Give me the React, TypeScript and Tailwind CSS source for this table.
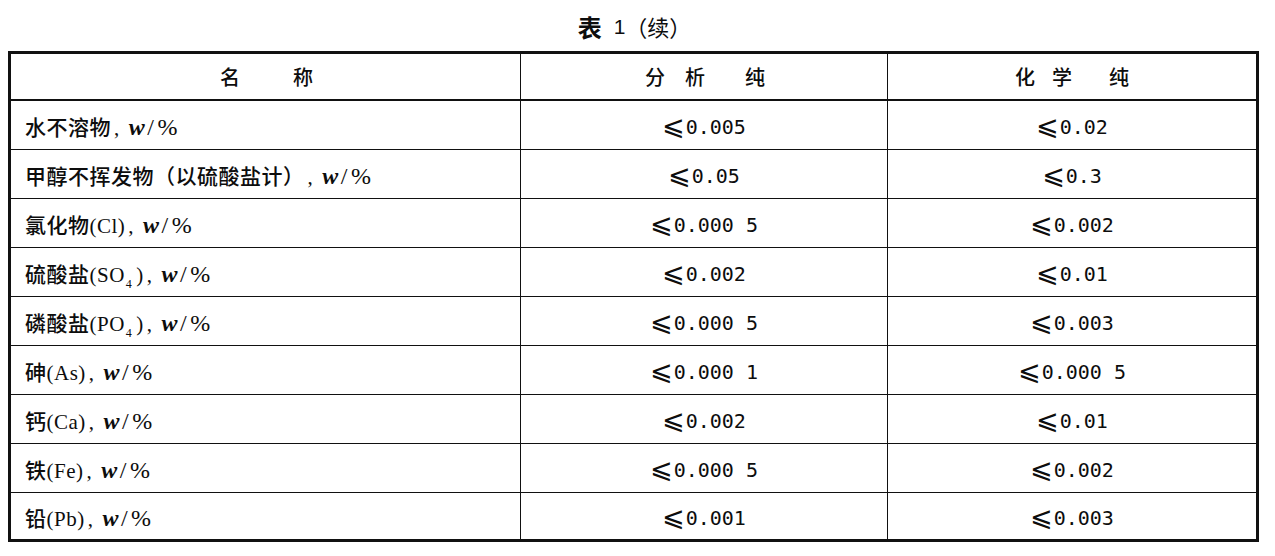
import React from "react";

function W() {
  return (
    <span className="inline-flex items-baseline">
      <span className="ml-[3px] mr-[9px]">,</span>
      <i className="font-bold text-[24px]" style={{ fontFamily: '"Liberation Serif", serif' }}>w</i>
      <span className="text-[24px] ml-[2px]">/</span>
      <span className="text-[24px] ml-[3px]">%</span>
    </span>
  );
}

const Sub = () => <sub className="text-[12px] align-[-3px] ml-[1px] mr-[4px]">4</sub>;

const rows: { name: React.ReactNode; a: string; b: string }[] = [
  { name: <>水不溶物<W /></>, a: "0.005", b: "0.02" },
  { name: <>甲醇不挥发物（以硫酸盐计）<W /></>, a: "0.05", b: "0.3" },
  { name: <>氯化物(Cl)<W /></>, a: "0.000 5", b: "0.002" },
  { name: <>硫酸盐(SO<Sub />)<W /></>, a: "0.002", b: "0.01" },
  { name: <>磷酸盐(PO<Sub />)<W /></>, a: "0.000 5", b: "0.003" },
  { name: <>砷(As)<W /></>, a: "0.000 1", b: "0.000 5" },
  { name: <>钙(Ca)<W /></>, a: "0.002", b: "0.01" },
  { name: <>铁(Fe)<W /></>, a: "0.000 5", b: "0.002" },
  { name: <>铅(Pb)<W /></>, a: "0.001", b: "0.003" },
];

function Val({ v }: { v: string }) {
  return (
    <span className="flex items-center justify-center">
      <span className="text-[27px] leading-none mt-[-2px] mr-[1px]" style={{ fontFamily: '"DejaVu Sans", sans-serif' }}>⩽</span>
      <span className="text-[20px] leading-none whitespace-pre" style={{ fontFamily: '"DejaVu Sans Mono", monospace' }}>{v}</span>
    </span>
  );
}

export default function App() {
  return (
    <div className="w-[1275px] h-[556px] bg-white text-[#0d0d0d]" style={{ fontFamily: '"Liberation Serif", "Noto Sans CJK SC", serif' }}>
      <div className="h-[51px] flex items-center justify-center pt-[2px] pr-[6px]">
        <span className="text-[24px] font-bold" style={{ fontFamily: '"Noto Sans CJK SC", sans-serif' }}>表</span>
        <span className="text-[21px] ml-[12px]" style={{ fontFamily: '"Liberation Sans", "Noto Sans CJK SC", sans-serif' }}>1</span>
        <span className="text-[22px]" style={{ fontFamily: '"Noto Sans CJK SC", sans-serif' }}>（续）</span>
      </div>
      <div className="ml-[8px] w-[1251px] border-[3px] border-[#111]">
        <div className="grid grid-cols-[510px_367px_1fr] h-[47px] border-b-2 border-[#111] text-[20px] font-medium" style={{ fontFamily: '"Noto Sans CJK SC", sans-serif' }}>
          <div className="flex items-center justify-center border-r-[1.5px] border-[#111] pl-[2px]">
            <span>名</span>
            <span className="ml-[53px]">称</span>
          </div>
          <div className="flex items-center justify-center border-r-[1.5px] border-[#111] pl-[2px]">
            <span>分</span>
            <span className="ml-[20px]">析</span>
            <span className="ml-[40px]">纯</span>
          </div>
          <div className="flex items-center justify-center">
            <span>化</span>
            <span className="ml-[17px]">学</span>
            <span className="ml-[37px]">纯</span>
          </div>
        </div>
        {rows.map((r, i) => (
          <div
            key={i}
            className={
              i === rows.length - 1
                ? "grid grid-cols-[510px_367px_1fr] h-[46px]"
                : "grid grid-cols-[510px_367px_1fr] h-[49px] border-b-[1.5px] border-[#111]"
            }
          >
            <div className="flex items-center pl-[14px] pt-[3px] border-r-[1.5px] border-[#111] text-[21px] tracking-[0.5px] font-medium">
              <span>{r.name}</span>
            </div>
            <div className="flex items-center justify-center pt-[3px] border-r-[1.5px] border-[#111]">
              <Val v={r.a} />
            </div>
            <div className="flex items-center justify-center pt-[3px]">
              <Val v={r.b} />
            </div>
          </div>
        ))}
      </div>
    </div>
  );
}
